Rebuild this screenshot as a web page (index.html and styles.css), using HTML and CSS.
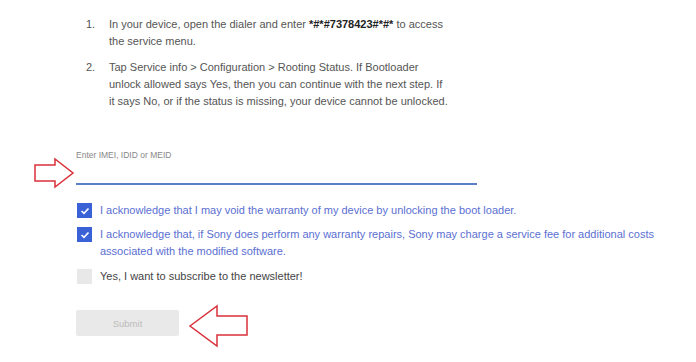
FILE: index.html
```html
<!DOCTYPE html>
<html>
<head>
<meta charset="utf-8">
<link rel="stylesheet" href="styles.css">
</head>
<body>
<div class="page">
  <ol class="steps">
    <li><span class="num">1.</span><p>In your device, open the dialer and enter <b>*#*#7378423#*#*</b> to access the service menu.</p></li>
    <li><span class="num">2.</span><p>Tap Service info &gt; Configuration &gt; Rooting Status. If Bootloader unlock allowed says Yes, then you can continue with the next step. If it says No, or if the status is missing, your device cannot be unlocked.</p></li>
  </ol>

  <div class="field">
    <svg class="arrow arrow-right" width="44" height="34" viewBox="0 0 44 34"><path d="M2 8 H22 V2 L40 16 L22 30 V24 H2 Z" fill="none" stroke="#d9303a" stroke-width="1.5" stroke-linejoin="miter"/></svg>
    <label class="label">Enter IMEI, IDID or MEID</label>
    <div class="input"></div>
  </div>

  <div class="checks">
    <div class="check"><span class="box on"><svg width="10" height="8" viewBox="0 0 10 8"><path d="M1.5 4 L4 6.3 L8.5 1.5" fill="none" stroke="#fff" stroke-width="1.6"/></svg></span><span class="txt blue">I acknowledge that I may void the warranty of my device by unlocking the boot loader.</span></div>
    <div class="check"><span class="box on"><svg width="10" height="8" viewBox="0 0 10 8"><path d="M1.5 4 L4 6.3 L8.5 1.5" fill="none" stroke="#fff" stroke-width="1.6"/></svg></span><span class="txt blue">I acknowledge that, if Sony does perform any warranty repairs, Sony may charge a service fee for additional costs associated with the modified software.</span></div>
    <div class="check"><span class="box"></span><span class="txt">Yes, I want to subscribe to the newsletter!</span></div>
  </div>

  <div class="submit-row">
    <button class="submit">Submit</button>
    <svg class="arrow arrow-left" width="62" height="44" viewBox="0 0 62 44"><path d="M2 22 L29 2 V12 H59 V31 H29 V42 Z" fill="none" stroke="#d9303a" stroke-width="1.5"/></svg>
  </div>
</div>
</body>
</html>
```
FILE: styles.css
```css
html, body { margin: 0; padding: 0; background: #fff; }
body { font-family: "Liberation Sans", Arial, sans-serif; }
.page { width: 696px; height: 362px; overflow: hidden; }

.steps { list-style: none; margin: 0; padding: 16px 0 0 86px; width: 364px; color: #555; font-size: 11px; }
.steps li { display: flex; margin-bottom: 9px; }
.steps li:last-child { margin-bottom: 0; }
.steps .num { width: 23px; flex: none; line-height: 17px; }
.steps p { margin: 0; line-height: 17px; }
.steps b { color: #222; }

.field { position: relative; margin: 40px 0 0 76px; width: 401px; }
.label { display: block; font-size: 8.5px; color: #888; line-height: 10px; }
.input { height: 23px; border-bottom: 2px solid #5b7fc4; }
.arrow-right { position: absolute; left: -43px; top: 7px; }

.checks { margin: 17px 0 0 77px; display: flex; flex-direction: column; }
.check { display: flex; align-items: flex-start; gap: 8px; margin-bottom: 7px; }
.check:last-child { margin-bottom: 0; margin-top: 1px; }
.box { flex: none; width: 15px; height: 15px; margin-top: 1px; background: #e8e8e8; display: flex; align-items: center; justify-content: center; }
.box.on { background: #3a62d6; }
.txt { font-size: 11px; line-height: 17px; color: #444; width: 566px; }
.txt.blue { color: #5b6fd2; }

.submit-row { display: flex; align-items: flex-start; margin: 25px 0 0 76px; gap: 9px; }
.submit { width: 103px; height: 26px; border: none; border-radius: 2px; background: #e9e9e9; color: #bbb; font-family: "Liberation Sans", Arial, sans-serif; font-size: 9.5px; padding: 0; }
.arrow-left { margin-top: -6px; }
```
